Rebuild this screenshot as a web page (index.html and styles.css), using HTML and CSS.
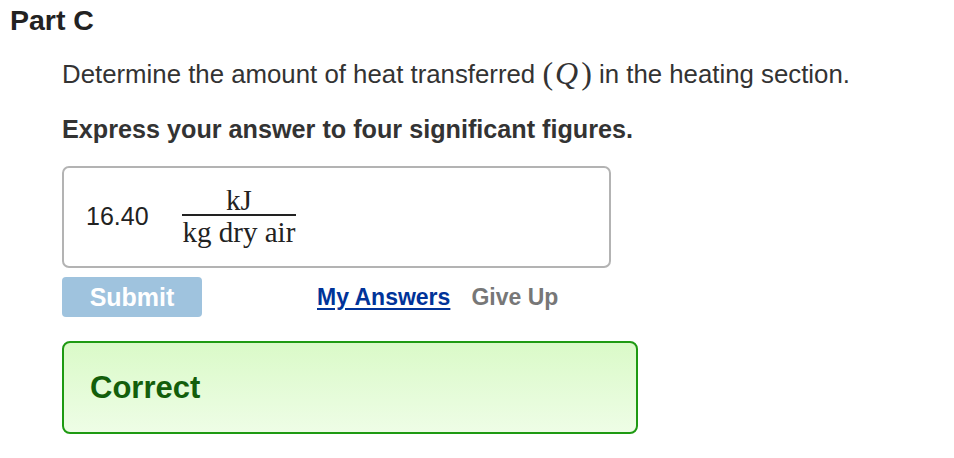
FILE: index.html
```html
<!DOCTYPE html>
<html lang="en">
<head>
    <meta charset="UTF-8">
    <title>Part C</title>
    <link rel="stylesheet" href="styles.css">
</head>
<body>
    <h2 class="part-title">Part C</h2>
    <div class="part-body">
        <p class="question">Determine the amount of heat transferred <span class="math">(<i>Q</i>)</span> in the heating section.</p>
        <p class="instruction">Express your answer to four significant figures.</p>

        <div class="answer-box">
            <span class="answer-value">16.40</span>
            <span class="fraction">
                <span class="num">kJ</span>
                <span class="den">kg dry air</span>
            </span>
        </div>

        <div class="actions">
            <button class="submit" disabled>Submit</button>
            <a href="#" class="my-answers">My Answers</a>
            <span class="give-up">Give Up</span>
        </div>

        <div class="feedback">Correct</div>
    </div>
</body>
</html>
```

FILE: styles.css
```css
* {
    margin: 0;
    padding: 0;
    box-sizing: border-box;
}

body {
    font-family: "Liberation Sans", Arial, sans-serif;
    color: #333;
    background: #fff;
    padding: 7px 10px;
}

.part-title {
    font-size: 28.5px;
    font-weight: 700;
    color: #222;
    line-height: 26px;
}

.part-body {
    padding-left: 52px;
    padding-top: 27px;
}

.question {
    font-size: 25.8px;
    line-height: 26px;
}

.math {
    font-family: "Liberation Serif", "Times New Roman", serif;
    font-size: 32px;
    vertical-align: -1px;
}

.math i {
    padding: 0 3px 0 2px;
}

.instruction {
    font-size: 25.2px;
    font-weight: 700;
    line-height: 26px;
    margin-top: 29px;
}

.answer-box {
    width: 549px;
    height: 102px;
    margin-top: 24px;
    border: 2px solid #b3b3b3;
    border-radius: 7px;
    display: flex;
    align-items: center;
    padding-left: 22px;
    padding-bottom: 2px;
}

.answer-value {
    font-size: 25px;
    color: #222;
    margin-right: 33px;
}

.fraction {
    display: inline-flex;
    flex-direction: column;
    align-items: center;
    font-family: "Liberation Serif", "Times New Roman", serif;
    font-size: 29px;
    color: #222;
    line-height: 26px;
}

.fraction .num {
    align-self: stretch;
    text-align: center;
    border-bottom: 2px solid #222;
    padding-bottom: 1px;
}

.fraction .den {
    padding: 3px 1px 0;
}

.actions {
    display: flex;
    align-items: center;
    margin-top: 9px;
}

.submit {
    width: 140px;
    height: 40px;
    border: none;
    border-radius: 4px;
    background: #9fc3de;
    color: #fff;
    font-family: "Liberation Sans", Arial, sans-serif;
    font-size: 25px;
    font-weight: 700;
}

.my-answers {
    margin-left: 115px;
    font-size: 23px;
    font-weight: 700;
    color: #003399;
    text-decoration: underline;
    text-underline-offset: 3px;
}

.give-up {
    margin-left: 21px;
    font-size: 23px;
    font-weight: 700;
    color: #777;
}

.feedback {
    width: 576px;
    height: 93px;
    margin-top: 24px;
    border: 2px solid #1e9a12;
    border-radius: 8px;
    background: linear-gradient(to bottom, #dafac8, #eefde6);
    color: #135e0b;
    font-size: 31px;
    font-weight: 700;
    display: flex;
    align-items: center;
    padding-left: 26px;
}
```
